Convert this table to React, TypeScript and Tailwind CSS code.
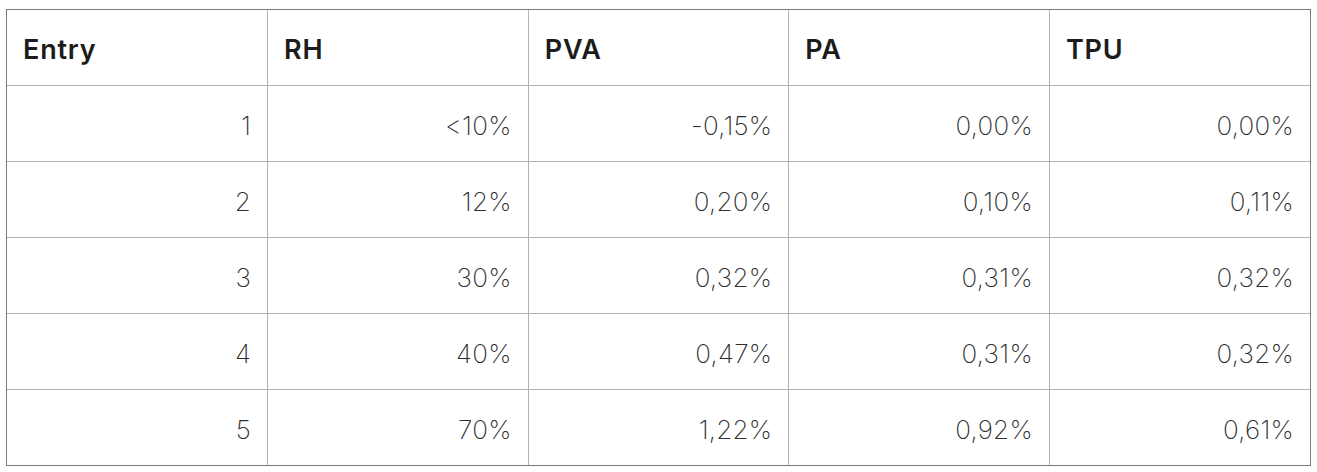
const headers = ['Entry', 'RH', 'PVA', 'PA', 'TPU'];

const rows = [
  ['1', '<10%', '-0,15%', '0,00%', '0,00%'],
  ['2', '12%', '0,20%', '0,10%', '0,11%'],
  ['3', '30%', '0,32%', '0,31%', '0,32%'],
  ['4', '40%', '0,47%', '0,31%', '0,32%'],
  ['5', '70%', '1,22%', '0,92%', '0,61%'],
];

export default function App() {
  return (
    <div className="min-h-[472px] bg-white pl-[6px] pt-[9px] font-['Inter','Liberation_Sans',sans-serif]">
      <div className="w-[1305px] border border-[#7a7a7a]">
        <table className="w-full table-fixed border-collapse">
          <thead>
            <tr className="h-[75px]">
              {headers.map((h, i) => (
                <th
                  key={h}
                  className={`px-4 pt-[5px] text-left align-middle text-[27px] font-semibold tracking-[0.03em] text-[#1c1c1c] ${
                    i > 0 ? 'border-l border-[#b3b3b3]' : ''
                  }`}
                >
                  {h}
                </th>
              ))}
            </tr>
          </thead>
          <tbody>
            {rows.map((row) => (
              <tr key={row[0]} className="h-[76px] border-t border-[#b3b3b3]">
                {row.map((cell, i) => (
                  <td
                    key={i}
                    className={`px-4 pt-[4px] text-right align-middle text-[26px] font-extralight tracking-[0.01em] text-[#2e2e2e] ${
                      i > 0 ? 'border-l border-[#b3b3b3]' : ''
                    }`}
                  >
                    {cell}
                  </td>
                ))}
              </tr>
            ))}
          </tbody>
        </table>
      </div>
    </div>
  );
}
